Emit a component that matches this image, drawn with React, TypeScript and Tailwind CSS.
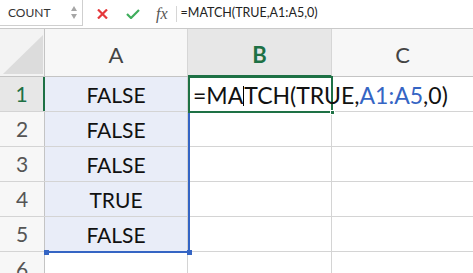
import React from "react";

const rows = ["FALSE", "FALSE", "FALSE", "TRUE", "FALSE"];

const Handle = ({ className }: { className: string }) => (
  <div className={`absolute w-[5px] h-[5px] ${className}`} />
);

const Toolbar = () => (
  <div className="flex h-[29px] border-b border-[#c9c9c9] bg-white font-['Lato',sans-serif]">
    <div className="flex w-[83px] h-[26px] items-center justify-between border-b border-r border-[#cfcfcf] pl-[8px] pr-[5px]">
      <span className="text-[12px] text-[#333]">COUNT</span>
      <div className="flex flex-col items-center gap-[3px]">
        <svg width="6" height="5" viewBox="0 0 6 5">
          <polygon points="3,0 6,5 0,5" fill="#a6a6a6" />
        </svg>
        <svg width="6" height="5" viewBox="0 0 6 5">
          <polygon points="0,0 6,0 3,5" fill="#a6a6a6" />
        </svg>
      </div>
    </div>
    <div className="flex items-center h-[27px] pl-[14px] gap-[18px]">
      <svg width="11" height="10" viewBox="0 0 11 10">
        <path d="M1 0.5 L10 9.5 M10 0.5 L1 9.5" stroke="#e5383b" strokeWidth="2.2" />
      </svg>
      <svg width="14" height="10" viewBox="0 0 14 10">
        <path d="M1 5 L5 9 L13 1" stroke="#3fad5c" strokeWidth="2.2" fill="none" />
      </svg>
      <span className="font-['Liberation_Serif',serif] italic text-[16px] text-[#555] leading-none -ml-[2px]">fx</span>
    </div>
    <div className="w-px h-[16px] bg-[#d6d6d6] self-center ml-[8px]" />
    <span className="self-center text-[12.5px] text-[#222] pl-[4px] pb-[1px]">=MATCH(TRUE,A1:A5,0)</span>
  </div>
);

const App = () => {
  return (
    <div className="w-[473px] h-[273px] overflow-hidden bg-white font-['Lato',sans-serif]">
      <Toolbar />
      <div className="relative">
        {/* column headers */}
        <div className="flex h-[48px] border-b border-[#c4c4c4] bg-[#f7f7f7]">
          <div className="relative w-[45px] border-r border-[#c4c4c4] bg-[#f3f3f3]">
            <svg className="absolute left-0 top-0" width="44" height="47" viewBox="0 0 44 47">
              <polygon points="3,45 43,45 43,6" fill="#dcdcdc" />
            </svg>
          </div>
          <div className="flex w-[143px] items-center justify-center pt-[4px] border-r border-[#d6d6d6] text-[22px] text-[#444]">
            A
          </div>
          <div className="flex w-[144px] items-center justify-center pt-[4px] border-r border-[#d6d6d6] bg-[#e7e7e7] border-b-2 border-b-[#1e7145] -mb-px text-[22px] font-bold text-[#1e7145]">
            B
          </div>
          <div className="flex flex-1 items-center justify-center pt-[4px] text-[22px] text-[#444]">
            C
          </div>
        </div>

        {/* rows */}
        {[...rows, ""].map((value, i) => (
          <div key={i} className="flex h-[35px] border-b border-[#d4d4d4]">
            <div
              className={`flex w-[45px] items-center justify-center border-r text-[21px] ${
                i === 0
                  ? "bg-[#e7e7e7] border-r-2 border-r-[#1e7145] text-[#1e7145]"
                  : "bg-[#f7f7f7] border-[#c4c4c4] text-[#555]"
              }`}
            >
              {i + 1}
            </div>
            <div
              className={`flex w-[143px] items-center justify-center pt-[2px] border-r border-[#d4d4d4] text-[21px] text-[#111] ${
                value ? "bg-[#e9edf8]" : ""
              }`}
            >
              {value}
            </div>
            <div className={`flex w-[144px] items-center pt-[2px] ${i === 0 ? "" : "border-r border-[#d4d4d4]"}`}>
              {i === 0 && (
                <span className="relative z-10 whitespace-nowrap pl-[5px] text-[23px] text-[#111]">
                  =MA<span className="inline-block w-px h-[20px] bg-black align-[-2px]" />TCH(TRUE,
                  <span className="text-[#3565c4]">A1:A5</span>,0)
                </span>
              )}
            </div>
            <div className="flex-1" />
          </div>
        ))}

        {/* range outline A1:A5 */}
        <div className="absolute left-[45px] top-[48px] w-[145px] h-[176px] border-r-2 border-b-2 border-[#3565c4] pointer-events-none" />
        <Handle className="left-[44px] top-[221px] bg-[#3565c4]" />
        <Handle className="left-[187px] top-[221px] bg-[#3565c4]" />

        {/* active cell B1 */}
        <div className="absolute left-[188px] top-[47px] w-[145px] h-[37px] border-2 border-[#1e7145] pointer-events-none" />
        <Handle className="left-[330px] top-[81px] bg-[#1e7145] border border-white" />
      </div>
    </div>
  );
};

export default App;
